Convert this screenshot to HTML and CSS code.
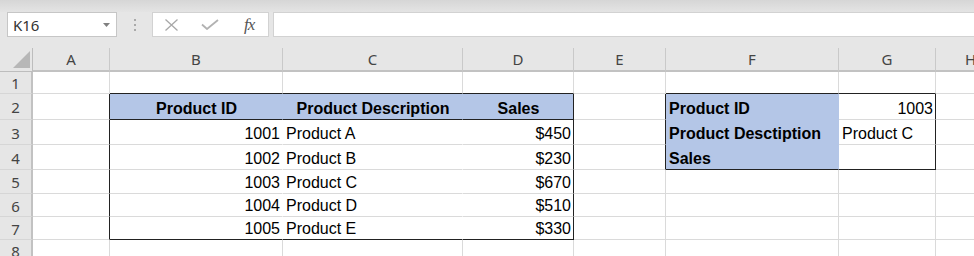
FILE: index.html
```html
<!DOCTYPE html>
<html lang="en">
<head>
    <meta charset="UTF-8">
    <title>Sheet</title>
    <link rel="stylesheet" href="styles.css">
</head>
<body>
<div id="app">
    <div class="top-strip"></div>
    <div class="formula-row">
        <div class="name-box">
            <span>K16</span>
            <svg class="caret" width="7" height="4" viewBox="0 0 7 4"><polygon points="0,0 7,0 3.5,4" fill="#808080"/></svg>
        </div>
        <div class="grip">
            <span></span><span></span><span></span>
        </div>
        <div class="fx-group">
            <svg width="13" height="12" viewBox="0 0 13 12"><path d="M0.5 0.5 L12.5 11.5 M12.5 0.5 L0.5 11.5" stroke="#a8a8a8" stroke-width="1.3" fill="none"/></svg>
            <svg width="18" height="11" viewBox="0 0 18 11"><path d="M1 5.5 L6 10 L17 1" stroke="#b2b2b2" stroke-width="1.8" fill="none"/></svg>
            <span class="fx">fx</span>
        </div>
        <div class="formula-input"></div>
    </div>

    <div class="sheet">
        <!-- column headers -->
        <div class="corner">
            <svg width="33" height="24" viewBox="0 0 33 24"><polygon points="30,3 30,20 13,20" fill="#b7b7b7"/></svg>
        </div>
        <div class="ch">A</div>
        <div class="ch">B</div>
        <div class="ch">C</div>
        <div class="ch">D</div>
        <div class="ch">E</div>
        <div class="ch">F</div>
        <div class="ch">G</div>
        <div class="ch">H</div>

        <!-- row 1 -->
        <div class="rh">1</div>
        <div class="c"></div>
        <div class="c edge-b"></div>
        <div class="c edge-b"></div>
        <div class="c edge-b"></div>
        <div class="c"></div>
        <div class="c edge-b"></div>
        <div class="c edge-b"></div>
        <div class="c"></div>

        <!-- row 2 -->
        <div class="rh">2</div>
        <div class="c edge-r"></div>
        <div class="c hd ctr">Product ID</div>
        <div class="c hd ctr">Product Description</div>
        <div class="c hd ctr edge-r">Sales</div>
        <div class="c edge-r"></div>
        <div class="c lbl">Product ID</div>
        <div class="c num edge-r">1003</div>
        <div class="c"></div>

        <!-- row 3 -->
        <div class="rh">3</div>
        <div class="c edge-r"></div>
        <div class="c num plain-r">1001</div>
        <div class="c plain-r">Product A</div>
        <div class="c num edge-r">$450</div>
        <div class="c edge-r"></div>
        <div class="c lbl">Product Desctiption</div>
        <div class="c edge-r">Product C</div>
        <div class="c"></div>

        <!-- row 4 -->
        <div class="rh">4</div>
        <div class="c edge-r"></div>
        <div class="c num plain-r">1002</div>
        <div class="c plain-r">Product B</div>
        <div class="c num edge-r">$230</div>
        <div class="c edge-r"></div>
        <div class="c lbl edge-b">Sales</div>
        <div class="c edge-r edge-b"></div>
        <div class="c"></div>

        <!-- row 5 -->
        <div class="rh">5</div>
        <div class="c edge-r"></div>
        <div class="c num plain-r">1003</div>
        <div class="c plain-r">Product C</div>
        <div class="c num edge-r">$670</div>
        <div class="c"></div>
        <div class="c"></div>
        <div class="c"></div>
        <div class="c"></div>

        <!-- row 6 -->
        <div class="rh">6</div>
        <div class="c edge-r"></div>
        <div class="c num plain-r">1004</div>
        <div class="c plain-r">Product D</div>
        <div class="c num edge-r">$510</div>
        <div class="c"></div>
        <div class="c"></div>
        <div class="c"></div>
        <div class="c"></div>

        <!-- row 7 -->
        <div class="rh">7</div>
        <div class="c edge-r"></div>
        <div class="c num plain-r edge-b">1005</div>
        <div class="c plain-r edge-b">Product E</div>
        <div class="c num edge-r edge-b">$330</div>
        <div class="c"></div>
        <div class="c"></div>
        <div class="c"></div>
        <div class="c"></div>

        <!-- row 8 -->
        <div class="rh">8</div>
        <div class="c"></div>
        <div class="c"></div>
        <div class="c"></div>
        <div class="c"></div>
        <div class="c"></div>
        <div class="c"></div>
        <div class="c"></div>
        <div class="c"></div>
    </div>
</div>
</body>
</html>
```

FILE: styles.css
```css
* {
    margin: 0;
    padding: 0;
    box-sizing: border-box;
}

body {
    width: 974px;
    height: 256px;
    overflow: hidden;
    background: #fff;
}

#app {
    width: 974px;
    height: 256px;
    overflow: hidden;
    background: #e6e6e6;
}

.top-strip {
    height: 12px;
    background: linear-gradient(#d6d6d6, #e4e4e4);
}

.formula-row {
    display: flex;
    height: 25px;
    padding-left: 7px;
    margin-bottom: 11px;
}

.name-box {
    width: 110px;
    height: 25px;
    background: #fff;
    border: 1px solid #c6c6c6;
    display: flex;
    align-items: center;
    justify-content: space-between;
    padding: 0 6px 0 5px;
    font: 15px "Noto Sans", sans-serif;
    color: #333;
}

.grip {
    width: 35px;
    display: flex;
    flex-direction: column;
    align-items: center;
    justify-content: center;
    gap: 3px;
}

.grip span {
    width: 2px;
    height: 2px;
    background: #a9a9a9;
}

.fx-group {
    width: 117px;
    height: 25px;
    background: #fff;
    border: 1px solid #d2d2d2;
    display: flex;
    align-items: center;
    padding-left: 12px;
    gap: 23px;
}

.fx-group .fx {
    font: italic 17px "Liberation Serif", serif;
    color: #555;
    margin-left: 2px;
    letter-spacing: -1px;
}

.formula-input {
    flex: 1;
    height: 25px;
    margin-left: 4px;
    background: #fff;
    border: 1px solid #d2d2d2;
    border-right: none;
}

.sheet {
    display: grid;
    grid-template-columns: 33px 77px 173px 180px 111px 92px 173px 97px 70px;
    grid-template-rows: 24px 22px 26px 25px 25px 24px 23px 23px 22px;
    width: 1006px;
    background: #fff;
}

.corner {
    background: #e6e6e6;
    border-right: 1px solid #bdbdbd;
    border-bottom: 1px solid #bdbdbd;
}

.ch {
    background: #e6e6e6;
    border-right: 1px solid #c9c9c9;
    border-bottom: 2px solid #c2c2c2;
    display: flex;
    align-items: center;
    justify-content: center;
    font: 15px "Noto Sans", sans-serif;
    color: #444;
}

.rh {
    background: #e6e6e6;
    border-right: 2px solid #c2c2c2;
    border-bottom: 1px solid #d6d6d6;
    display: flex;
    align-items: center;
    justify-content: center;
    padding-top: 1px;
    font: 15px "Noto Sans", sans-serif;
    color: #444;
}

.c {
    border-right: 1px solid #dadada;
    border-bottom: 1px solid #dadada;
    display: flex;
    align-items: flex-end;
    padding: 0 2px 0 3px;
    white-space: nowrap;
    font: 16px/20px "Liberation Sans", Arial, sans-serif;
    color: #000;
}

.num {
    justify-content: flex-end;
}

.ctr {
    justify-content: center;
}

.plain-r {
    border-right-color: #fff;
}

.hd {
    background: #b4c6e7;
    font-weight: bold;
    border-right-color: #b4c6e7;
    border-bottom-color: #222;
}

.lbl {
    background: #b4c6e7;
    font-weight: bold;
    border-right-color: #b4c6e7;
    border-bottom-color: #b4c6e7;
}

.edge-r {
    border-right-color: #222;
}

.edge-b {
    border-bottom-color: #222;
}
```
